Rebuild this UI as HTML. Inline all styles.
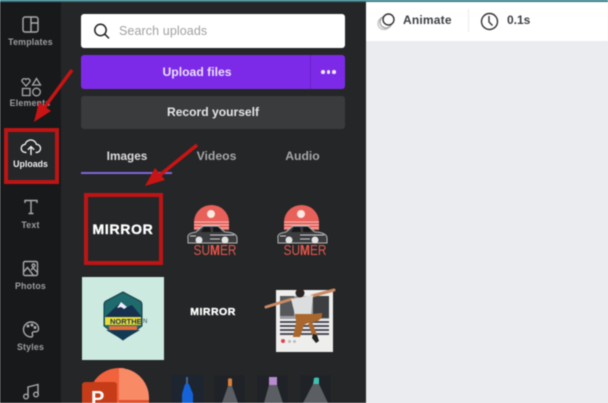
<!DOCTYPE html>
<html><head><meta charset="utf-8"><style>
html,body{margin:0;padding:0;background:#ebecf0;width:608px;height:403px;overflow:hidden}
#r{position:relative;width:608px;height:403px;overflow:hidden;font-family:"Liberation Sans",sans-serif;filter:blur(.4px);background:#ebecf0}
#r div,#r svg{position:absolute}
.t{white-space:nowrap;text-align:center;transform:translateX(-50%)}
.nav{font-size:8.800px;font-weight:bold;color:#9d9ea1;letter-spacing:.2px;line-height:11px}
.tab{font-size:12.200px;font-weight:bold;line-height:15px}
.m{font-weight:bold;color:#fff;-webkit-text-stroke:.35px #fff}
.sup{color:#d9584f;font-size:14.500px;line-height:14px;transform:translateX(-50%) scaleX(.82);letter-spacing:0}
.sup b{color:#f2574a}
</style></head><body><div id="r">
<div style="left:366px;top:0;width:242px;height:41px;background:#fff"></div>
<div style="left:0;top:0;width:608px;height:2px;background:#2f7f86"></div>
<div style="left:0;top:2px;width:61px;height:401px;background:#18191b"></div>
<div style="left:61px;top:2px;width:305px;height:401px;background:#252627"></div>

<!-- sidebar -->
<svg style="left:20px;top:13px" width="22" height="22" viewBox="0 0 22 22" fill="none" stroke="#a9aaad" stroke-width="1.4"><rect x="3" y="4" width="15" height="15" rx="2"/><path d="M11 4v15M11 10h7"/></svg>
<div class="t nav" style="left:30.500px;top:37px">Templates</div>
<svg style="left:19px;top:75px" width="24" height="24" viewBox="0 0 24 24" fill="none" stroke="#a9aaad" stroke-width="1.300"><path d="M7 11 3 6.500a2.300 2.300 0 0 1 4-2 2.300 2.300 0 0 1 4 2zM17.500 3.500l4 6.500h-8zM3.500 13.500h7.500v7h-7.500z"/><circle cx="17.500" cy="17" r="3.800"/></svg>
<div class="t nav" style="left:30px;top:98px">Elements</div>

<div style="left:6px;top:129px;width:50px;height:52px;background:#252627"></div>
<svg style="left:20px;top:137px" width="22" height="20" viewBox="0 0 24 22" fill="none" stroke="#f1f1f2" stroke-width="1.500"><path d="M7 17H6a4.500 4.500 0 0 1-.5-9 6.500 6.500 0 0 1 12.500 0 4.500 4.500 0 0 1 0 9h-1"/><path d="M12 20v-9M8.500 14l3.500-3.500 3.500 3.500"/></svg>
<div class="t nav" style="left:30.500px;top:159px;color:#f1f1f2;letter-spacing:0">Uploads</div>

<svg style="left:20px;top:198px" width="22" height="18" viewBox="0 0 22 18" fill="none" stroke="#a9aaad" stroke-width="1.400"><path d="M5 5V2.500h12V5M11 2.500V15.500M8.500 15.500h5"/></svg>
<div class="t nav" style="left:30.500px;top:220px">Text</div>
<svg style="left:20px;top:258px" width="22" height="20" viewBox="0 0 22 20" fill="none" stroke="#a9aaad" stroke-width="1.400"><rect x="3.500" y="3.500" width="14" height="14" rx="1.500"/><circle cx="13.500" cy="7.500" r="1.500"/><path d="M3.500 14l4-4.500 6 8M11 12l2-2 4.500 4.500"/></svg>
<div class="t nav" style="left:30.500px;top:281px">Photos</div>
<svg style="left:20px;top:319px" width="22" height="20" viewBox="0 0 22 20" fill="none" stroke="#a9aaad" stroke-width="1.400"><path d="M11 3a7.500 7.500 0 1 0 0 15c2 0 1.800-2 1.300-3-.5-1.500 1-2.500 2.500-2.300 2 .3 3.700-.7 3.700-3C18.500 5.500 15 3 11 3z"/><circle cx="8" cy="7" r=".8"/><circle cx="12" cy="6" r=".8"/><circle cx="15" cy="8.500" r=".8"/></svg>
<div class="t nav" style="left:30.500px;top:342px">Styles</div>
<svg style="left:21px;top:381px" width="20" height="20" viewBox="0 0 20 20" fill="none" stroke="#a9aaad" stroke-width="1.400"><path d="M7 15V6l10-2.500V13"/><circle cx="5" cy="15.500" r="2.300"/><circle cx="15" cy="13.500" r="2.300"/></svg>

<!-- search -->
<div style="left:81px;top:14px;width:264px;height:34px;background:#fff;border-radius:3px"></div>
<svg style="left:92px;top:21px" width="20" height="20" viewBox="0 0 20 20" fill="none" stroke="#222" stroke-width="1.500"><circle cx="8.500" cy="9" r="5.700"/><path d="M12.800 13.200l4.200 4.200"/></svg>
<div style="left:119px;top:24px;font-size:12.500px;line-height:15px;color:#a0a1a4;letter-spacing:.1px;white-space:nowrap">Search uploads</div>

<!-- upload -->
<div style="left:81px;top:55px;width:264px;height:34px;background:#7d2ae8;border-radius:3px"></div>
<div style="left:310px;top:55px;width:1px;height:34px;background:#6a22c9"></div>
<div class="t" style="left:197px;top:65px;font-size:12.200px;line-height:15px;font-weight:bold;color:#ece0fb">Upload files</div>
<div style="left:321px;top:70px;width:3.500px;height:3.500px;border-radius:50%;background:#f0e8fc"></div>
<div style="left:326.500px;top:70px;width:3.500px;height:3.500px;border-radius:50%;background:#f0e8fc"></div>
<div style="left:332px;top:70px;width:3.500px;height:3.500px;border-radius:50%;background:#f0e8fc"></div>

<!-- record -->
<div style="left:81px;top:96px;width:264px;height:33px;background:#3a3b3d;border-radius:3px"></div>
<div class="t" style="left:213px;top:105px;font-size:12.100px;line-height:15px;font-weight:bold;color:#e6e6e7">Record yourself</div>

<!-- tabs -->
<div class="t tab" style="left:127px;top:149px;color:#dcdcdd;font-size:11.800px">Images</div>
<div class="t tab" style="left:216.500px;top:149px;color:#a6a7a9">Videos</div>
<div class="t tab" style="left:302.500px;top:149px;color:#a6a7a9">Audio</div>
<div style="left:81px;top:172px;width:91px;height:2px;background:#7f66d8"></div>

<!-- grid: mirror 1 -->
<div class="t m" style="left:123px;top:221px;font-size:14px;line-height:16px;letter-spacing:.7px">MIRROR</div>
<div style="left:84px;top:193px;width:71px;height:64px;border:4px solid #bd1414"></div>

<!-- super logos -->
<svg style="left:186px;top:203px" width="52" height="43" viewBox="0 0 52 43"><path d="M8 27V19a17.500 17 0 0 1 35 0v8z" fill="#e8605a"/><circle cx="25" cy="11" r="4" fill="#fbe8e0"/><path d="M8 19h35M8 22h35M8 25h35" stroke="#f5bdb6"/><path d="M2 36c-1-5 2-6 8-7l7-6h15l7 6c6 0 12 2 12 6v5H2z" fill="#3b3c3e" stroke="#b5b6b8"/><path d="M18 24h6l1 5h-10zM27 24h5l4 5h-9z" fill="#17181a"/><circle cx="13" cy="37" r="3.500" fill="#e3e3e3"/><circle cx="39" cy="37" r="3.500" fill="#e3e3e3"/><path d="M24 32h24M4 33h6M24 36h10" stroke="#d0d1d3"/></svg>
<div class="t sup" style="left:214.500px;top:244px">SU<b>M</b>ER</div>
<svg style="left:276px;top:203px" width="52" height="43" viewBox="0 0 52 43"><path d="M8 27V19a17.500 17 0 0 1 35 0v8z" fill="#e8605a"/><circle cx="25" cy="11" r="4" fill="#fbe8e0"/><path d="M8 19h35M8 22h35M8 25h35" stroke="#f5bdb6"/><path d="M2 36c-1-5 2-6 8-7l7-6h15l7 6c6 0 12 2 12 6v5H2z" fill="#3b3c3e" stroke="#b5b6b8"/><path d="M18 24h6l1 5h-10zM27 24h5l4 5h-9z" fill="#17181a"/><circle cx="13" cy="37" r="3.500" fill="#e3e3e3"/><circle cx="39" cy="37" r="3.500" fill="#e3e3e3"/><path d="M24 32h24M4 33h6M24 36h10" stroke="#d0d1d3"/></svg>
<div class="t sup" style="left:304.500px;top:244px">SU<b>M</b>ER</div>

<!-- mint badge -->
<div style="left:82px;top:277px;width:82px;height:83px;background:#cdeae0"></div>
<svg style="left:100px;top:288px" width="48" height="56" viewBox="0 0 48 56"><path d="M23 4 40 13Q42 14 42 17V38L23 52 4 38V17Q4 14 6 13z" fill="#1f6a6c" stroke="#143d47" stroke-linejoin="round"/><path d="M5 29 21 14l6 5 5-2 10 12z" fill="#16304e"/><path d="M21 14l-4 6 4-1 3 2 3-2z" fill="#eef"/><rect x="5" y="29" width="36" height="8" fill="#e7dd3c"/><rect x="9" y="38" width="28" height="4" fill="#e2703a"/><path d="M6 42h34L23 52z" fill="#123a54"/></svg>
<div style="left:110px;top:317px;font-size:7.500px;line-height:9px;color:#234;font-weight:bold;white-space:nowrap">NORTHE</div>
<div style="left:143px;top:318px;font-size:6px;line-height:8px;color:#345">N</div>

<!-- mirror 2 -->
<div class="t m" style="left:213px;top:306px;font-size:10.500px;line-height:12px;letter-spacing:.5px">MIRROR</div>

<!-- photo card -->
<div style="left:276px;top:290px;width:57px;height:62px;background:#eeeeec"></div>
<div style="left:280px;top:296px;width:49px;height:39px;background:#9a9b9e"></div>
<div style="left:280px;top:296px;width:14px;height:20px;background:#55575a"></div>
<div style="left:313px;top:296px;width:16px;height:22px;background:#3d3e41"></div>
<div style="left:280px;top:319px;width:49px;height:16px;background:repeating-linear-gradient(#f0f0f2 0 2px,#4b4c55 2px 4px)"></div>
<svg style="left:262px;top:284px" width="78" height="60" viewBox="0 0 78 60" fill="none"><path d="M4 23 30 15M50 12 72 6" stroke="#c98a62" stroke-width="3" stroke-linecap="round"/><path d="M29 15 51 11 49 31H33z" fill="#dcddde"/><circle cx="38" cy="9" r="4.500" fill="#2a2422"/><path d="M33 30h17l10-1q1 7-8 9l-6 1-4 2-4 12h-7l3-14q0-4-1-9z" fill="#a9672d"/><path d="M50 38l5 13-4 2-5-13z" fill="#a9672d"/><path d="M51 50l4 1 2 6-3 2-4-5z" fill="#222"/></svg>
<div style="left:281px;top:339px;width:4px;height:4px;border-radius:50%;background:#e0444a"></div>
<div style="left:288px;top:340px;width:3px;height:3px;border-radius:50%;background:#bbb"></div>
<div style="left:293px;top:340px;width:3px;height:3px;border-radius:50%;background:#bbb"></div>

<!-- ppt -->
<div style="left:89px;top:368px;width:35px;height:35px;background:#f2623c;border-radius:30px 0 0 0"></div>
<div style="left:119px;top:368px;width:30px;height:32px;background:#f98a66;border-radius:0 30px 0 0"></div>
<div style="left:119px;top:400px;width:30px;height:3px;background:#e24f2a"></div>
<div style="left:82px;top:382px;width:35px;height:21px;background:#c63c18;border-radius:3px 3px 0 0"></div>
<div style="left:91px;top:388px;font-size:20px;line-height:23px;height:15px;overflow:hidden;font-weight:bold;color:#fff">P</div>

<!-- markers -->
<div style="left:172px;top:375px;width:31px;height:28px;background:#1c2530"></div>
<div style="left:214px;top:375px;width:31px;height:28px;background:#1f2327"></div>
<div style="left:257px;top:375px;width:31px;height:28px;background:#1f2327"></div>
<div style="left:300px;top:375px;width:31px;height:28px;background:#1f2327"></div>
<svg style="left:172px;top:375px" width="160" height="28" viewBox="0 0 160 28">
<path d="M14 2h2v8h-2z" fill="#47688c"/><path d="M13 9h4l4 10v9H10V19z" fill="#1463d8"/>
<path d="M56 12V4q2-1.500 4 0v8z" fill="#d9813a"/><path d="M56 11h4l6 17H50z" fill="#5b5e62"/>
<path d="M97 11V2h8v9z" fill="#b88ad0"/><path d="M97 10h8l6 18H92z" fill="#5b5e62"/>
<path d="M141 10l1-7q3-1 5 0v7z" fill="#3fc0b0"/><path d="M141 9h6l9 19H131z" fill="#5b5e62"/></svg>

<!-- top bar -->
<svg style="left:376px;top:11px" width="22" height="22" viewBox="0 0 22 22" fill="none"><circle cx="8" cy="12.500" r="6" stroke="#c4c4c6" stroke-width="1.300"/><circle cx="10" cy="11" r="6" fill="#fff" stroke="#a4a4a6" stroke-width="1.300"/><circle cx="12.500" cy="8.500" r="5.500" fill="#fff" stroke="#333" stroke-width="1.400"/></svg>
<div style="left:403px;top:13px;font-size:12px;line-height:15px;font-weight:bold;color:#3c3f44;letter-spacing:.2px">Animate</div>
<div style="left:468px;top:9px;width:1px;height:23px;background:#eceded"></div>
<svg style="left:479px;top:11px" width="21" height="21" viewBox="0 0 21 21" fill="none" stroke="#333" stroke-width="1.400"><circle cx="10.500" cy="10.500" r="8"/><path d="M10 5v6l3.500 3.500"/></svg>
<div style="left:507px;top:13px;font-size:12px;line-height:15px;font-weight:bold;color:#3c3f44">0.1s</div>

<!-- annotations -->
<div style="left:4px;top:128px;width:47px;height:48px;border:4px solid #bd1414"></div>
<svg style="left:0;top:0" width="608" height="403" viewBox="0 0 608 403" fill="none"><path d="M72 70 44 108" stroke="#c81414" stroke-width="3.500"/><path d="M34 122l5-20 12 9z" fill="#c81414"/><path d="M197 145 160 175" stroke="#c81414" stroke-width="3.500"/><path d="M145 186l10-18 10 12z" fill="#c81414"/></svg>
</div></body></html>
